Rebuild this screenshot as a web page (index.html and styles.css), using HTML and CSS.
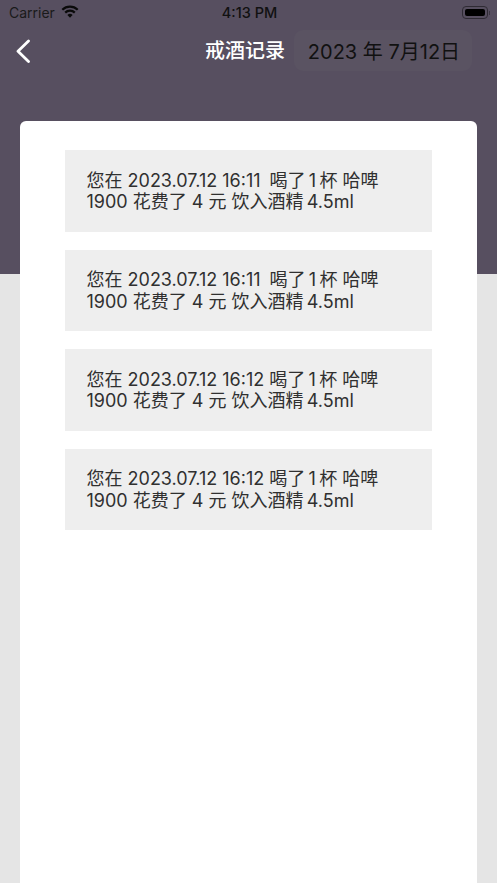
FILE: index.html
```html
<!DOCTYPE html>
<html lang="zh">
<head>
<meta charset="utf-8">
<title>戒酒记录</title>
<link rel="stylesheet" href="styles.css">
</head>
<body>
<div class="hero">
  <div class="status">
    <div class="status-left">
      <span class="carrier">Carrier</span>
      <svg class="wifi" width="18" height="13" viewBox="0 0 18 13"><path class="wifi-arc" d="M1.300 4.700 A11 11 0 0 1 16.700 4.700"/><path class="wifi-arc" d="M4.200 7.600 A6.800 6.800 0 0 1 13.800 7.600"/><path d="M9 12.800 L6.400 10 A3.700 3.700 0 0 1 11.600 10 Z"/></svg>
    </div>
    <span class="time">4:13 PM</span>
    <div class="battery"><span class="battery-body"><span class="battery-fill"></span></span><span class="battery-cap"></span></div>
  </div>
  <div class="nav">
    <svg class="back" width="16" height="24" viewBox="0 0 16 24"><path d="M13.500 2 L3 12.200 L13.500 22.500" fill="none" stroke="#fff" stroke-width="2.800" stroke-linecap="round" stroke-linejoin="round"/></svg>
    <div class="nav-right">
      <span class="title">戒酒记录</span>
      <span class="date">2023 年 7月12日</span>
    </div>
  </div>
</div>
<main class="card">
  <div class="record"><p class="line">您在 2023.07.12 16:11&#8194;喝了&#8201;1&#8201;杯 哈啤</p><p class="line">1900 花费了 4 元 饮入酒精&#8201;4.5ml</p></div>
  <div class="record"><p class="line">您在 2023.07.12 16:11&#8194;喝了&#8201;1&#8201;杯 哈啤</p><p class="line">1900 花费了 4 元 饮入酒精&#8201;4.5ml</p></div>
  <div class="record"><p class="line">您在 2023.07.12 16:12 喝了&#8201;1&#8201;杯 哈啤</p><p class="line">1900 花费了 4 元 饮入酒精&#8201;4.5ml</p></div>
  <div class="record"><p class="line">您在 2023.07.12 16:12 喝了&#8201;1&#8201;杯 哈啤</p><p class="line">1900 花费了 4 元 饮入酒精&#8201;4.5ml</p></div>
</main>
</body>
</html>
```
FILE: styles.css
```css
* { box-sizing: border-box; }
html, body { margin: 0; height: 100%; }
body {
  background: #e5e5e5;
  font-family: "Inter", "Noto Sans CJK SC", sans-serif;
  overflow: hidden;
  color: #1f1f1f;
}
.hero { background: #574f60; height: 274px; }
.status {
  height: 25px;
  padding: 0 7px 0 9px;
  display: grid;
  grid-template-columns: 1fr auto 1fr;
  align-items: center;
  color: #111;
  font-size: 14px;
}
.status-left { display: flex; align-items: center; gap: 6px; }
.carrier { font-weight: 400; color: #1a1a1a; }
.wifi { fill: #0a0a0a; margin-top: -2px; }
.wifi-arc { fill: none; stroke: #0a0a0a; stroke-width: 2.200px; }
.time { font-weight: 500; font-size: 14.500px; }
.battery { justify-self: end; display: flex; align-items: center; gap: 1px; }
.battery-body {
  width: 26px; height: 13px; padding: 2px;
  border: 1px solid #2f2b34; border-radius: 4px; display: block;
}
.battery-fill { display: block; height: 100%; background: #000; border-radius: 2px; }
.battery-cap { width: 1px; height: 4px; background: #3c3742; }
.nav {
  display: flex; align-items: center; justify-content: space-between;
  height: 41px; margin-top: 5px; padding: 0 25px 0 15px;
}
.nav-right { display: flex; align-items: center; gap: 9px; }
.title { color: #fff; font-size: 20px; font-weight: 500; line-height: 24px; }
.date {
  background: #5a5362;
  border-radius: 9px;
  color: #111;
  font-size: 20px;
  height: 41px; width: 178px;
  padding-left: 2px;
  display: flex; align-items: center; justify-content: center;
}
.card {
  position: relative;
  margin: -153.500px 20px 0 19.500px;
  height: 780px;
  background: #fff;
  border-radius: 6px 6px 0 0;
  padding: 29.500px 45px 0 45.500px;
  display: flex; flex-direction: column; gap: 18px;
}
.record {
  height: 81.500px;
  background: #eeeeee;
  padding: 19.500px 21.500px 0;
  font-size: 18px;
  line-height: 21.500px;
  color: #303030;
}
.line { margin: 0; white-space: nowrap; }
```
